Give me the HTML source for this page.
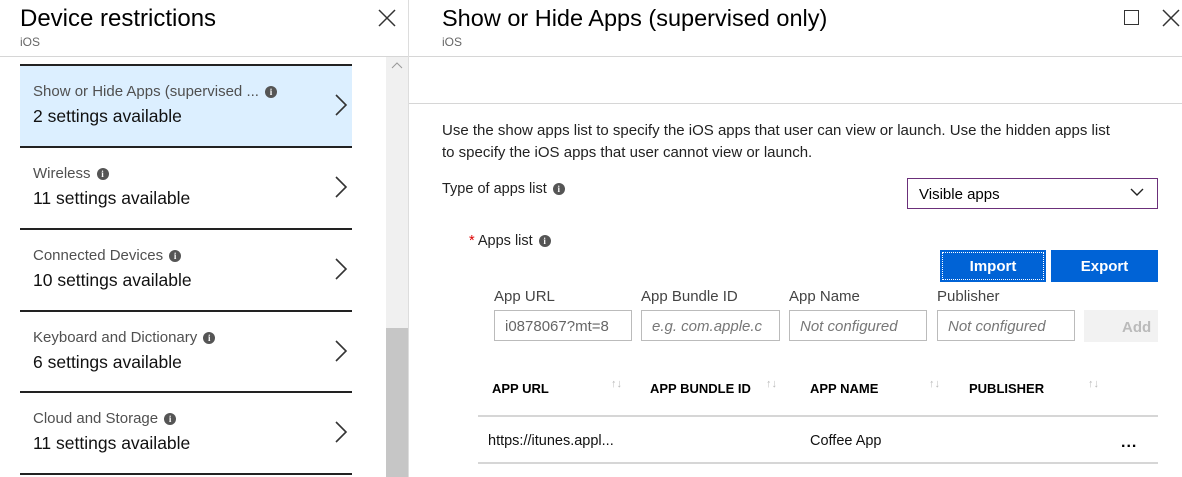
<!DOCTYPE html>
<html><head><style>
*{margin:0;padding:0;box-sizing:border-box}
body{width:1182px;height:477px;overflow:hidden;background:#fff;font-family:"Liberation Sans",sans-serif;color:#000;position:relative}
.a{position:absolute;white-space:nowrap}
.hl{position:absolute;height:1px;background:#d6d6d6}
.info{display:inline-block;width:12px;height:12px;border-radius:50%;background:#555;color:#fff;font-size:9px;font-weight:bold;text-align:center;line-height:12px;vertical-align:middle;margin-left:6px;font-family:"Liberation Serif",serif}
.item{position:absolute;left:20px;width:332px;height:82px;border-top:2px solid #222}
.item .t{position:absolute;left:13px;top:17px;font-size:15px;color:#505050}
.item .s{position:absolute;left:13px;top:40px;font-size:17.5px;color:#111}
.item svg{position:absolute;right:4px;top:28px}
.inp{position:absolute;top:310px;height:31px;border:1px solid #bbb;font-size:15px;font-style:italic;color:#777;padding:7px 0 0 10px;overflow:hidden;white-space:nowrap}
.lab{position:absolute;top:288px;font-size:15px;color:#444}
.th{position:absolute;top:381px;font-size:13px;font-weight:bold}
.sort{position:absolute;top:378px;font-size:11px;color:#bbb}
</style></head><body>
<div class="a" style="left:20px;top:5px;font-size:24px;font-weight:500">Device restrictions</div>
<div class="a" style="left:20px;top:35px;font-size:12px;color:#666">iOS</div>
<svg class="a" style="left:378px;top:9px" width="18" height="18"><path d="M1 1L17 17M17 1L1 17" stroke="#333" stroke-width="1.5"/></svg>
<div class="hl" style="left:0;top:56px;width:408px"></div>
<div class="a" style="left:408px;top:0;width:1px;height:477px;background:#ddd"></div>
<div class="a" style="left:386px;top:57px;width:22px;height:420px;background:#f0f0f0"></div>
<div class="a" style="left:386px;top:328px;width:22px;height:149px;background:#c6c6c6"></div>
<svg class="a" style="left:390px;top:62px" width="14" height="8"><path d="M2 6L7 1L12 6" stroke="#999" fill="none"/></svg>
<div class="item" style="top:64px;background:#dcefff"><div class="t">Show or Hide Apps (supervised ...<span class="info">i</span></div><div class="s">2 settings available</div><svg width="14" height="22"><path d="M2 1L12 11L2 21" stroke="#333" stroke-width="1.6" fill="none"/></svg></div>
<div class="item" style="top:146px"><div class="t">Wireless<span class="info">i</span></div><div class="s">11 settings available</div><svg width="14" height="22"><path d="M2 1L12 11L2 21" stroke="#333" stroke-width="1.6" fill="none"/></svg></div>
<div class="item" style="top:228px"><div class="t">Connected Devices<span class="info">i</span></div><div class="s">10 settings available</div><svg width="14" height="22"><path d="M2 1L12 11L2 21" stroke="#333" stroke-width="1.6" fill="none"/></svg></div>
<div class="item" style="top:310px"><div class="t">Keyboard and Dictionary<span class="info">i</span></div><div class="s">6 settings available</div><svg width="14" height="22"><path d="M2 1L12 11L2 21" stroke="#333" stroke-width="1.6" fill="none"/></svg></div>
<div class="item" style="top:391px;height:84px;border-bottom:2px solid #222"><div class="t">Cloud and Storage<span class="info">i</span></div><div class="s">11 settings available</div><svg width="14" height="22"><path d="M2 1L12 11L2 21" stroke="#333" stroke-width="1.6" fill="none"/></svg></div>

<div class="a" style="left:442px;top:5px;font-size:23.5px;font-weight:500">Show or Hide Apps (supervised only)</div>
<div class="a" style="left:442px;top:35px;font-size:12px;color:#666">iOS</div>
<div class="a" style="left:1124px;top:10px;width:15px;height:15px;border:1.5px solid #333"></div>
<svg class="a" style="left:1162px;top:9px" width="18" height="18"><path d="M1 1L17 17M17 1L1 17" stroke="#333" stroke-width="1.5"/></svg>
<div class="hl" style="left:409px;top:56px;width:773px"></div>
<div class="hl" style="left:409px;top:103px;width:773px"></div>
<div class="a" style="left:442px;top:120px;font-size:15px;line-height:22px;color:#222">Use the show apps list to specify the iOS apps that user can view or launch. Use the hidden apps list<br>to specify the iOS apps that user cannot view or launch.</div>
<div class="a" style="left:442px;top:181px;font-size:14.5px;color:#222">Type of apps list<span class="info">i</span></div>
<div class="a" style="left:907px;top:178px;width:251px;height:31px;border:1px solid #6b2f7a;font-size:15px;padding:7px 0 0 11px">Visible apps</div>
<svg class="a" style="left:1130px;top:188px" width="14" height="9"><path d="M1 1L7 7L13 1" stroke="#222" stroke-width="1.4" fill="none"/></svg>
<div class="a" style="left:469px;top:233px;font-size:14.5px;color:#222"><span style="color:#d00">*</span> Apps list<span class="info">i</span></div>
<div class="a" style="left:940px;top:250px;width:106px;height:32px;background:#0063d6;outline:1px dotted #fff;outline-offset:-3px;color:#fff;font-weight:bold;font-size:15px;text-align:center;line-height:33px">Import</div>
<div class="a" style="left:1051px;top:250px;width:107px;height:32px;background:#0063d6;color:#fff;font-weight:bold;font-size:15px;text-align:center;line-height:33px">Export</div>
<div class="lab" style="left:494px">App URL</div>
<div class="lab" style="left:641px">App Bundle ID</div>
<div class="lab" style="left:789px">App Name</div>
<div class="lab" style="left:937px">Publisher</div>
<div class="inp" style="left:494px;width:138px;font-style:normal;color:#666">i0878067?mt=8</div>
<div class="inp" style="left:641px;width:139px">e.g. com.apple.c</div>
<div class="inp" style="left:789px;width:138px">Not configured</div>
<div class="inp" style="left:937px;width:138px">Not configured</div>
<div class="a" style="left:1084px;top:310px;width:74px;height:32px;background:#f2f2f2;color:#bbb;font-size:15px;font-weight:bold;padding:9px 0 0 38px">Add</div>
<div class="th" style="left:492px">APP URL</div><div class="sort" style="left:611px">↑↓</div>
<div class="th" style="left:650px">APP BUNDLE ID</div><div class="sort" style="left:766px">↑↓</div>
<div class="th" style="left:810px">APP NAME</div><div class="sort" style="left:929px">↑↓</div>
<div class="th" style="left:969px">PUBLISHER</div><div class="sort" style="left:1088px">↑↓</div>
<div class="hl" style="left:478px;top:415px;width:680px;height:2px"></div>
<div class="a" style="left:488px;top:433px;font-size:14.5px;color:#111">https://itunes.appl...</div>
<div class="a" style="left:810px;top:433px;font-size:14.5px;color:#111">Coffee App</div>
<div class="a" style="left:1121px;top:434px;font-size:16px;font-weight:bold;letter-spacing:1px">...</div>
<div class="hl" style="left:478px;top:462px;width:680px;height:2px"></div>
</body></html>
